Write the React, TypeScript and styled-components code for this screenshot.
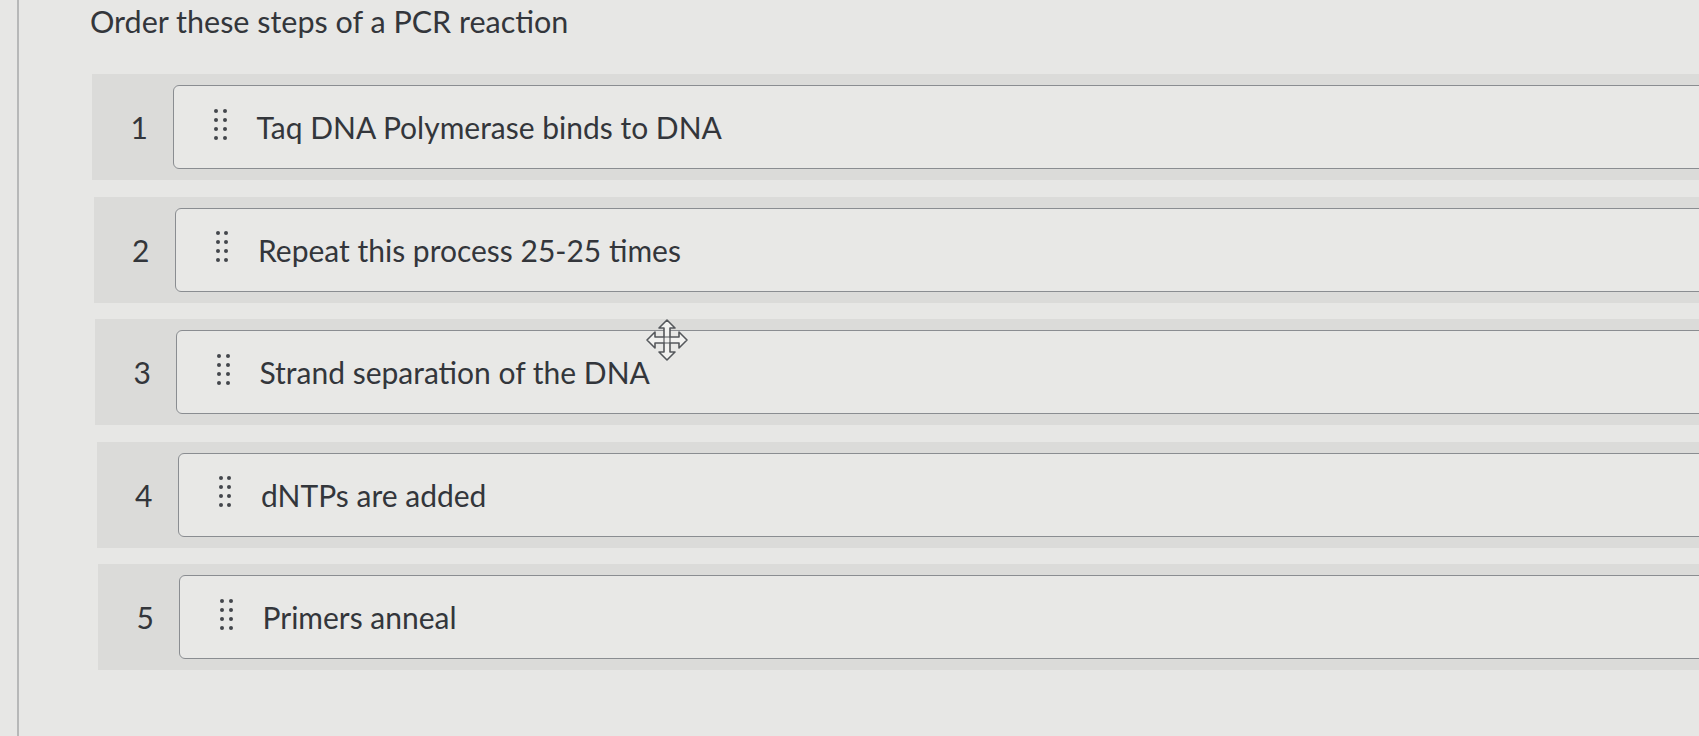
import React from "react";
import styled, { createGlobalStyle } from "styled-components";

const Global = createGlobalStyle`
  html, body { margin: 0; padding: 0; }
  body {
    background: #e7e7e5;
    overflow: hidden;
    font-family: Lato, "Open Sans", sans-serif;
  }
`;

const Page = styled.div`
  position: relative;
  height: 736px;
  margin-left: 17px;
  border-left: 2px solid #b7b8b8;
  padding-left: 71px;
  box-sizing: border-box;
`;

const Title = styled.h1`
  margin: 0;
  font-family: Lato, sans-serif;
  font-weight: 400;
  font-size: 30.5px;
  line-height: 42px;
  color: #33363b;
`;

const List = styled.ol`
  list-style: none;
  margin: 32px -60px 0 0;
  padding: 0;
  display: flex;
  flex-direction: column;
  gap: 16.5px;
`;

const Band = styled.li<{ $shift: number }>`
  display: flex;
  align-items: center;
  height: 106px;
  box-sizing: border-box;
  padding: 11px 0;
  margin-left: ${(p) => 2 + p.$shift}px;
  background: #dbdbd9;
`;

const Num = styled.span`
  width: 56px;
  flex: none;
  margin-right: 25px;
  text-align: right;
  font-size: 30px;
  color: #33363b;
`;

const Card = styled.div`
  flex: 1;
  height: 84px;
  box-sizing: border-box;
  display: flex;
  align-items: center;
  padding-left: 40px;
  gap: 30px;
  background: #e8e8e6;
  border: 1.5px solid #8a8d91;
  border-radius: 6px;
`;

const Handle = styled.span`
  display: grid;
  grid-template-columns: 4px 4px;
  grid-auto-rows: 4px;
  column-gap: 4.5px;
  row-gap: 5px;
  margin-top: -6px;
`;

const Dot = styled.i`
  width: 4px;
  height: 4px;
  border-radius: 50%;
  background: #43464c;
`;

const Label = styled.span`
  font-size: 30px;
  color: #33363b;
`;

const Cursor = styled.svg`
  position: absolute;
  left: 626px;
  top: 318px;
  width: 44px;
  height: 44px;
`;

const steps = [
  "Taq DNA Polymerase binds to DNA",
  "Repeat this process 25-25 times",
  "Strand separation of the DNA",
  "dNTPs are added",
  "Primers anneal",
];

export default function App() {
  return (
    <>
      <Global />
      <Page>
        <Title>Order these steps of a PCR reaction</Title>
        <List>
          {steps.map((s, i) => (
            <Band key={s} $shift={i * 1.5}>
              <Num>{i + 1}</Num>
              <Card>
                <Handle aria-hidden>
                  {Array.from({ length: 8 }).map((_, k) => (
                    <Dot key={k} />
                  ))}
                </Handle>
                <Label>{s}</Label>
              </Card>
            </Band>
          ))}
        </List>
        <Cursor viewBox="0 0 44 44" aria-hidden>
          <path
            d="M22 2 L30 10 L25 10 L25 19 L34 19 L34 14 L42 22 L34 30 L34 25 L25 25 L25 34 L30 34 L22 42 L14 34 L19 34 L19 25 L10 25 L10 30 L2 22 L10 14 L10 19 L19 19 L19 10 L14 10 Z"
            fill="#f2f2f0"
            stroke="#55585c"
            strokeWidth="1.6"
            strokeLinejoin="round"
          />
          <path
            d="M19 19 h6 v6 h-6 Z"
            stroke="#55585c"
            strokeWidth="1.2"
            fill="none"
          />
        </Cursor>
      </Page>
    </>
  );
}
